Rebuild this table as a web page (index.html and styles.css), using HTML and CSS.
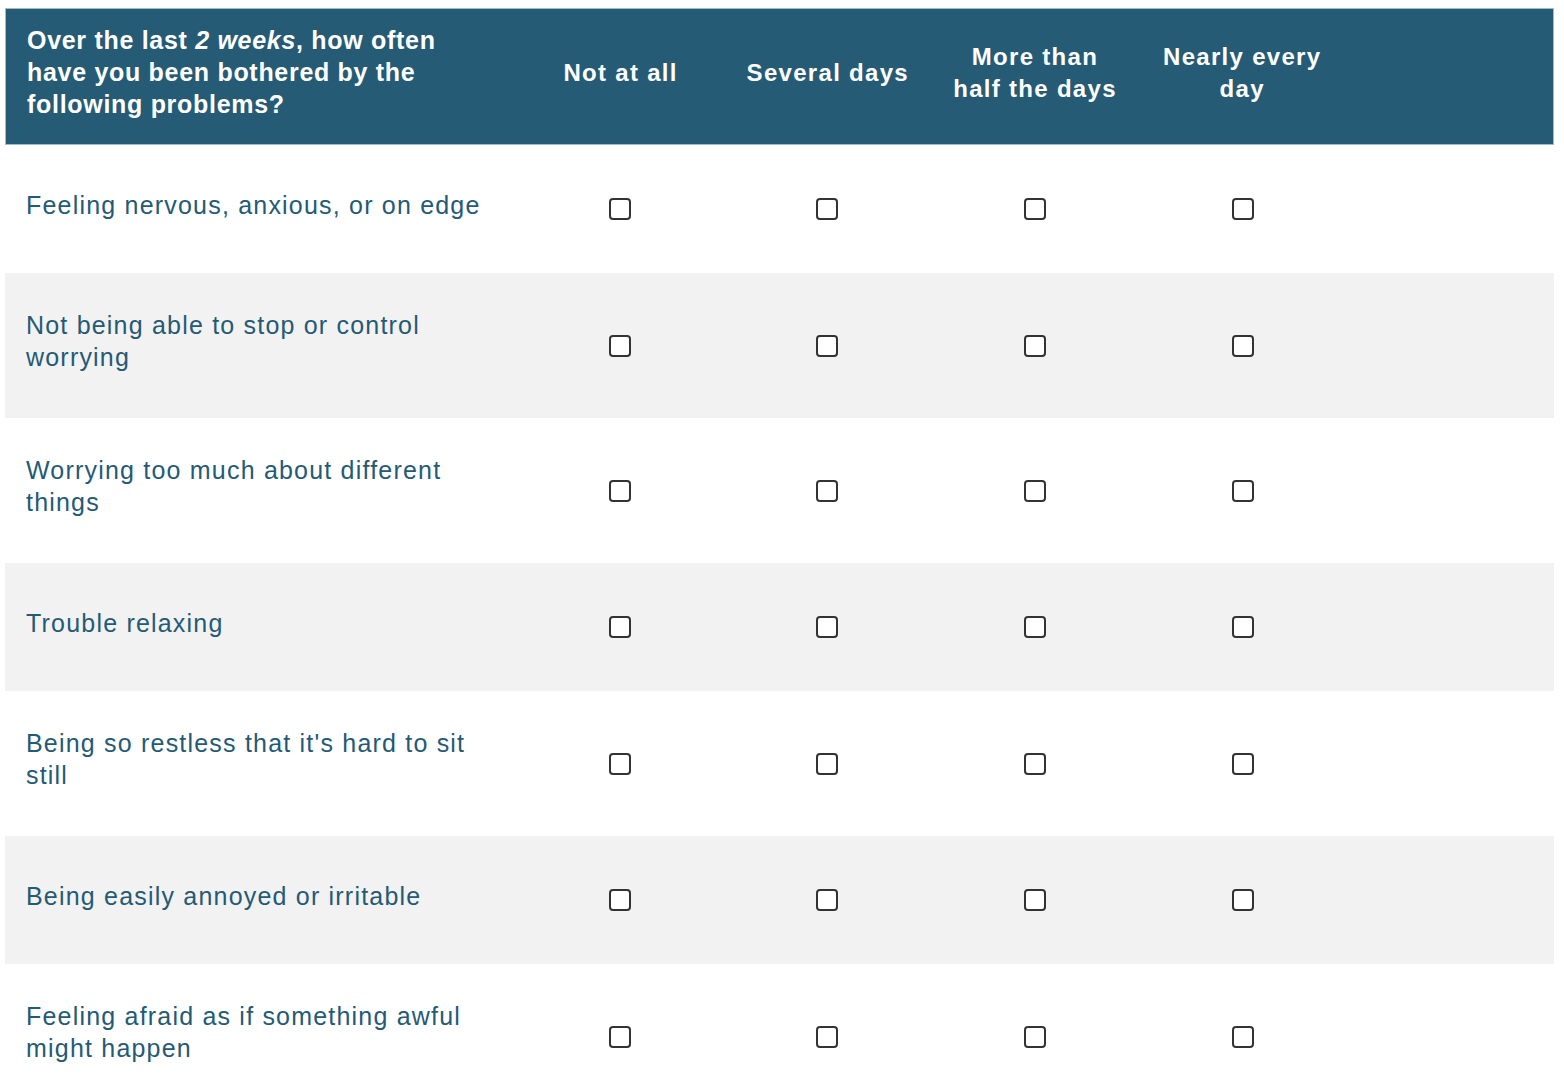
FILE: index.html
```html
<!DOCTYPE html>
<html lang="en">
<head>
<meta charset="utf-8">
<title>GAD-7</title>
<link rel="stylesheet" href="styles.css">
</head>
<body>
<div class="survey">
  <div class="row head">
    <div class="question">Over the last <em>2 weeks</em>, how often have you been bothered by the following problems?</div>
    <div class="opt">Not at all</div>
    <div class="opt">Several days</div>
    <div class="opt">More than<br>half the days</div>
    <div class="opt">Nearly every<br>day</div>
    <div class="opt"></div>
  </div>
  <div class="row">
    <div class="item">Feeling nervous, anxious, or on edge</div>
    <div class="cell"><input type="checkbox" class="box"></div>
    <div class="cell"><input type="checkbox" class="box"></div>
    <div class="cell"><input type="checkbox" class="box"></div>
    <div class="cell"><input type="checkbox" class="box"></div>
    <div class="cell"></div>
  </div>
  <div class="row alt">
    <div class="item">Not being able to stop or control worrying</div>
    <div class="cell"><input type="checkbox" class="box"></div>
    <div class="cell"><input type="checkbox" class="box"></div>
    <div class="cell"><input type="checkbox" class="box"></div>
    <div class="cell"><input type="checkbox" class="box"></div>
    <div class="cell"></div>
  </div>
  <div class="row">
    <div class="item">Worrying too much about different things</div>
    <div class="cell"><input type="checkbox" class="box"></div>
    <div class="cell"><input type="checkbox" class="box"></div>
    <div class="cell"><input type="checkbox" class="box"></div>
    <div class="cell"><input type="checkbox" class="box"></div>
    <div class="cell"></div>
  </div>
  <div class="row alt">
    <div class="item">Trouble relaxing</div>
    <div class="cell"><input type="checkbox" class="box"></div>
    <div class="cell"><input type="checkbox" class="box"></div>
    <div class="cell"><input type="checkbox" class="box"></div>
    <div class="cell"><input type="checkbox" class="box"></div>
    <div class="cell"></div>
  </div>
  <div class="row">
    <div class="item">Being so restless that it's hard to sit still</div>
    <div class="cell"><input type="checkbox" class="box"></div>
    <div class="cell"><input type="checkbox" class="box"></div>
    <div class="cell"><input type="checkbox" class="box"></div>
    <div class="cell"><input type="checkbox" class="box"></div>
    <div class="cell"></div>
  </div>
  <div class="row alt">
    <div class="item">Being easily annoyed or irritable</div>
    <div class="cell"><input type="checkbox" class="box"></div>
    <div class="cell"><input type="checkbox" class="box"></div>
    <div class="cell"><input type="checkbox" class="box"></div>
    <div class="cell"><input type="checkbox" class="box"></div>
    <div class="cell"></div>
  </div>
  <div class="row">
    <div class="item">Feeling afraid as if something awful might happen</div>
    <div class="cell"><input type="checkbox" class="box"></div>
    <div class="cell"><input type="checkbox" class="box"></div>
    <div class="cell"><input type="checkbox" class="box"></div>
    <div class="cell"><input type="checkbox" class="box"></div>
    <div class="cell"></div>
  </div>
</div>
</body>
</html>
```
FILE: styles.css
```css
html, body {
  margin: 0;
  padding: 0;
  background: #ffffff;
}

body {
  padding: 8px 10px 0 5px;
  font-family: "Liberation Sans", Arial, sans-serif;
}

.survey {
  width: 1549px;
}

.row {
  display: grid;
  grid-template-columns: 511px repeat(5, 1fr);
  align-items: center;
  min-height: 128px;
  background: #ffffff;
}

.row.alt {
  background: #f2f2f2;
}

.row.head {
  min-height: 137px;
  box-sizing: border-box;
  background: #265b75;
  border: 1px solid #9fbccb;
  color: #ffffff;
  font-weight: bold;
  font-size: 24px;
  line-height: 32px;
}

.question {
  padding: 15px 20px 24px 21px;
  width: 425px;
  font-size: 25px;
  letter-spacing: 0.7px;
}

.question em {
  font-style: italic;
}

.opt {
  text-align: center;
  letter-spacing: 1.3px;
  padding-bottom: 8px;
}

.item {
  color: #245a75;
  font-size: 25px;
  line-height: 32px;
  letter-spacing: 1.2px;
  padding: 36px 20px 45px 21px;
}

.cell {
  display: flex;
  justify-content: center;
  align-items: center;
}

.box {
  appearance: none;
  -webkit-appearance: none;
  margin: 0;
  width: 22px;
  height: 22px;
  border: 2px solid #333333;
  border-radius: 4px;
  background: #ffffff;
}
```
